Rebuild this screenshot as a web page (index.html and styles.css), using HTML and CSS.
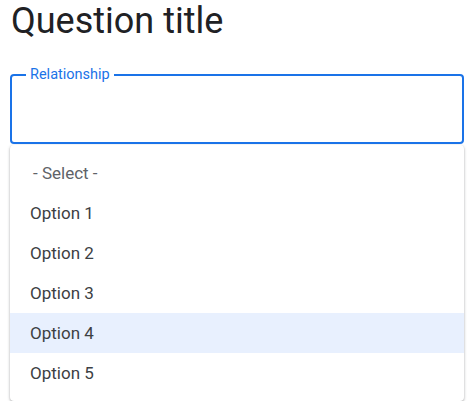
FILE: index.html
```html
<!DOCTYPE html>
<html lang="en">
<head>
    <meta charset="UTF-8">
    <meta name="viewport" content="width=device-width, initial-scale=1.0">
    <title>Question title</title>
    <link rel="stylesheet" href="styles.css">
</head>
<body>
    <div class="question">
        <h1 class="question-title">Question title</h1>
        <div class="field">
            <span class="field-label">Relationship</span>
        </div>
        <ul class="menu">
            <li class="menu-item placeholder">- Select -</li>
            <li class="menu-item">Option 1</li>
            <li class="menu-item">Option 2</li>
            <li class="menu-item">Option 3</li>
            <li class="menu-item active">Option 4</li>
            <li class="menu-item">Option 5</li>
        </ul>
    </div>
</body>
</html>
```

FILE: styles.css
```css
body {
    margin: 0;
    background-color: #fff;
    font-family: Roboto, "Liberation Sans", sans-serif;
}
.question {
    padding: 0 10px;
}
.question-title {
    margin: 0;
    padding: 0 1px 31px;
    font-family: Roboto, "Open Sans", sans-serif;
    font-size: 36px;
    font-weight: 400;
    line-height: 43px;
    color: #202124;
}
.field {
    position: relative;
    height: 66px;
    border: 2px solid #1a73e8;
    border-radius: 4px;
}
.field-label {
    position: absolute;
    top: -10px;
    left: 14px;
    padding: 0 4px;
    background-color: #fff;
    font-size: 14.5px;
    line-height: 18px;
    color: #1a73e8;
}
.menu {
    list-style: none;
    margin: 1px 0 0;
    padding: 8px 0;
    background-color: #fff;
    border-radius: 4px;
    box-shadow: 0 1px 3px rgba(60, 64, 67, 0.35), 0 1px 2px rgba(60, 64, 67, 0.15);
}
.menu-item {
    height: 40px;
    padding-left: 20px;
    font-size: 17px;
    line-height: 40px;
    color: #3c4043;
}
.menu-item.placeholder {
    padding-left: 23px;
    color: #5f6368;
}
.menu-item.active {
    background-color: #e8f0fe;
}
```
